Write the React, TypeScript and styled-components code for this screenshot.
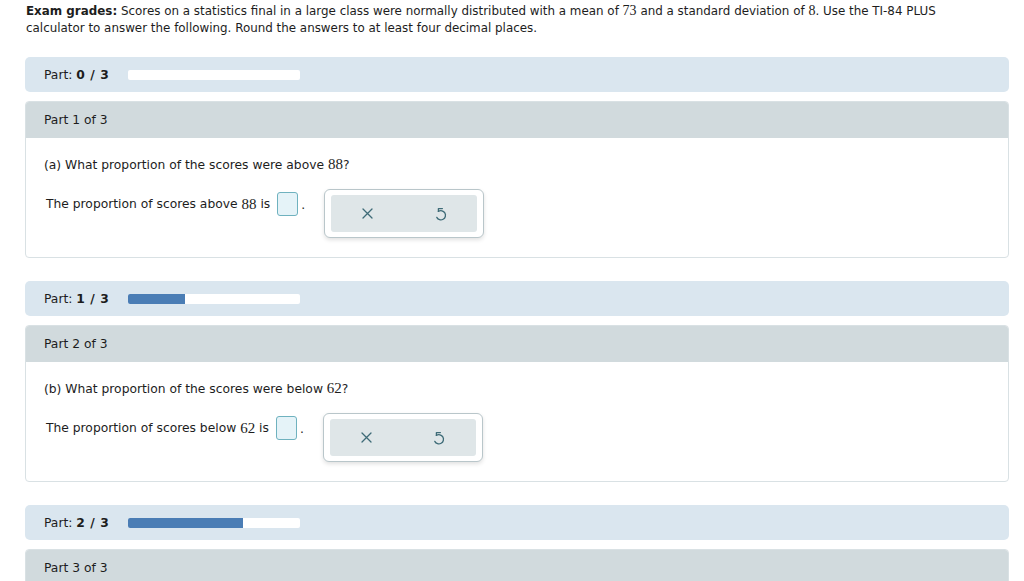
import React from 'react'
import styled, { createGlobalStyle } from 'styled-components'

const GlobalStyle = createGlobalStyle`
    body {
        margin: 0;
        background: #ffffff;
        font-family: "DejaVu Sans", Verdana, sans-serif;
        font-size: 12.3px;
        color: #1d1d1d;
    }
`

const Page = styled.div`
    padding: 2px 15px 0 25px;
    display: flex;
    flex-direction: column;
`

const Intro = styled.p`
    margin: 0 0 20px 1px;
    max-width: 960px;
    font-size: 11.9px;
    line-height: 17px;
`

const Num = styled.span<{ $small?: boolean }>`
    font-family: "Liberation Serif", "Times New Roman", serif;
    font-size: ${(p) => (p.$small ? '14px' : '15px')};
`

const ProgressBar = styled.div`
    height: 35px;
    background: #dae6ef;
    border-radius: 5px;
    display: flex;
    align-items: center;
    padding-left: 19px;
    margin-bottom: 9px;
`

const ProgressLabel = styled.span`
    width: 84px;
    b {
        font-weight: bold;
        letter-spacing: 0.6px;
    }
`

const Track = styled.div`
    width: 172px;
    height: 10px;
    background: #ffffff;
    border-radius: 2px;
    overflow: hidden;
    display: flex;
`

const Fill = styled.div<{ $parts: number }>`
    width: ${(p) => (p.$parts / 3) * 100}%;
    background: #4a7db5;
`

const Card = styled.div`
    border: 1px solid #d9e1e4;
    border-radius: 4px;
    overflow: hidden;
    margin-bottom: 23px;
`

const CardHeader = styled.div`
    height: 36px;
    background: #d1dadd;
    display: flex;
    align-items: center;
    padding-left: 18px;
`

const CardBody = styled.div`
    padding: 18px 18px 19px 18px;
`

const Question = styled.div`
    line-height: 16px;
    margin-bottom: 16px;
`

const AnswerRow = styled.div`
    display: flex;
    align-items: flex-start;
    padding-left: 2px;
`

const AnswerText = styled.span`
    display: flex;
    align-items: center;
    margin-top: 3px;
`

const InputBox = styled.span`
    display: inline-block;
    width: 19px;
    height: 22px;
    margin-left: 7px;
    border: 1px solid #6fb2bf;
    border-radius: 3px;
    background: #e5f3f8;
`

const Period = styled.span`
    margin-left: 3px;
    margin-right: 19px;
    margin-top: 2px;
`

const ToolPanel = styled.div`
    border: 1px solid #b9c6ca;
    border-radius: 6px;
    padding: 5px 6px 5px 6px;
    box-shadow: 0 2px 4px rgba(0, 0, 0, 0.12);
    background: #ffffff;
`

const ToolInner = styled.div`
    width: 146px;
    height: 37px;
    background: #dfe6e8;
    border-radius: 3px;
    display: flex;
    align-items: center;
    justify-content: space-around;
    color: #3e6b77;
`

const IconButton = styled.span`
    width: 20px;
    display: flex;
    justify-content: center;
    align-items: center;
`

function ClearIcon() {
    return (
        <svg width="11" height="11" viewBox="0 0 11 11" fill="none" stroke="currentColor" strokeWidth="1.3" strokeLinecap="round">
            <path d="M1 1 L10 10 M10 1 L1 10" />
        </svg>
    )
}

function UndoIcon() {
    return (
        <svg width="12" height="14" viewBox="0 0 12 14" fill="none" stroke="currentColor" strokeWidth="1.3" strokeLinecap="round" strokeLinejoin="round">
            <path d="M7.4 1.6 L3.4 1.6 L3.4 4.4" />
            <path d="M3.4 4.4 A4.6 4.6 0 1 1 1.8 10.4" />
        </svg>
    )
}

type PartProps = {
    index: number
    question?: React.ReactNode
    answer?: React.ReactNode
}

function PartCard({ index, question, answer }: PartProps) {
    return (
        <Card>
            <CardHeader>Part {index} of 3</CardHeader>
            {question && (
                <CardBody>
                    <Question>{question}</Question>
                    <AnswerRow>
                        <AnswerText>
                            {answer}
                            <InputBox />
                            <Period>.</Period>
                        </AnswerText>
                        <ToolPanel>
                            <ToolInner>
                                <IconButton><ClearIcon /></IconButton>
                                <IconButton><UndoIcon /></IconButton>
                            </ToolInner>
                        </ToolPanel>
                    </AnswerRow>
                </CardBody>
            )}
        </Card>
    )
}

function Progress({ done }: { done: number }) {
    return (
        <ProgressBar>
            <ProgressLabel>Part: <b>{done} / 3</b></ProgressLabel>
            <Track>
                <Fill $parts={done} />
            </Track>
        </ProgressBar>
    )
}

export default function App() {
    return (
        <>
            <GlobalStyle />
            <Page>
                <Intro>
                    <b>Exam grades:</b> Scores on a statistics final in a large class were normally distributed with a mean of <Num $small>73</Num> and a standard deviation of <Num $small>8</Num>. Use the TI-84 PLUS calculator to answer the following. Round the answers to at least four decimal places.
                </Intro>

                <Progress done={0} />
                <PartCard
                    index={1}
                    question={<>(a) What proportion of the scores were above <Num>88</Num>?</>}
                    answer={<>The proportion of scores above&nbsp;<Num>88</Num>&nbsp;is</>}
                />

                <Progress done={1} />
                <PartCard
                    index={2}
                    question={<>(b) What proportion of the scores were below <Num>62</Num>?</>}
                    answer={<>The proportion of scores below&nbsp;<Num>62</Num>&nbsp;is</>}
                />

                <Progress done={2} />
                <PartCard index={3} />
            </Page>
        </>
    )
}
